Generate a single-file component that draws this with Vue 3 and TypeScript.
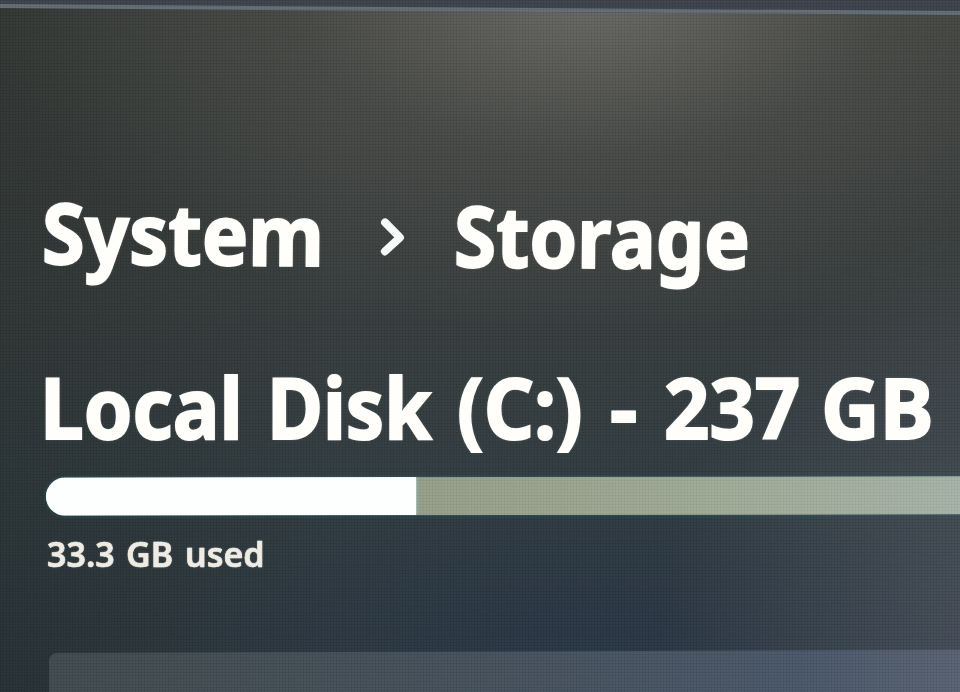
<template>
  <main class="settings">
    <div class="window-edge"></div>

    <nav class="breadcrumb">
      <span class="word">System</span>
      <svg class="chevron" viewBox="0 0 28 42" aria-hidden="true">
        <path d="M5 6 L20 21 L5 35" />
      </svg>
      <span class="word">Storage</span>
    </nav>

    <section class="disk">
      <h1 class="disk-title">
        <span v-for="part in titleParts" :key="part.text" class="word" :style="{ transform: `scaleX(${part.stretch})` }">{{ part.text }}</span>
      </h1>
      <div class="track">
        <div class="fill" :style="{ width: `${usedWidth}px` }"></div>
      </div>
      <p class="used">
        <span v-for="part in usedParts" :key="part">{{ part }}</span>
      </p>
    </section>

    <section class="card"></section>
    <div class="pixel-grid"></div>
  </main>
</template>

<script setup lang="ts">
interface TitlePart {
  text: string
  stretch: number
}

const titleParts: TitlePart[] = [
  { text: 'Local', stretch: 0.93 },
  { text: 'Disk', stretch: 0.91 },
  { text: '(C:)', stretch: 0.935 },
  { text: '-', stretch: 1.02 },
  { text: '237', stretch: 0.945 },
  { text: 'GB', stretch: 0.965 },
]

const usedParts = ['33.3', 'GB', 'used']
const usedWidth = 370
</script>

<style>
body {
  background: #30393c;
}
</style>

<style scoped>
.settings {
  position: relative;
  display: flex;
  flex-direction: column;
  width: 960px;
  height: 692px;
  overflow: hidden;
  color: #fffefa;
  font-family: "Noto Sans", "Open Sans", sans-serif;
  background:
    radial-gradient(ellipse 600px 340px at 590px -10px, rgba(126, 124, 120, 0.72), rgba(92, 92, 88, 0.4) 50%, transparent),
    radial-gradient(ellipse 360px 420px at 1020px 640px, rgba(94, 99, 112, 0.6), transparent),
    radial-gradient(ellipse 480px 190px at 590px 640px, rgba(42, 57, 77, 0.55), transparent),
    linear-gradient(90deg, rgba(30, 38, 36, 0.3), transparent 35%),
    linear-gradient(#40433f, #3c4141 42%, #354044 70%, #303b42);
}

.window-edge {
  height: 4px;
  margin: 0 -4px;
  flex: none;
  background: #42464f;
  border-bottom: 4px solid #667078;
  transform: rotate(0.42deg);
  transform-origin: 0 0;
  box-shadow: 0 -6px 0 2px #42464f;
}

.breadcrumb {
  display: flex;
  align-items: center;
  flex: none;
  height: 100px;
  margin: 174px 0 0 42px;
  transform: rotate(0.4deg);
  transform-origin: 0 50%;
}

.word {
  display: block;
  font-size: 84px;
  font-weight: 700;
  line-height: 100px;
  white-space: nowrap;
  transform: scaleX(0.925);
  transform-origin: 0 50%;
  -webkit-text-stroke: 2px #fffefa;
  text-shadow: 0 0 3px rgba(205, 230, 245, 0.5);
}

.breadcrumb .word {
  width: 338px;
}

.breadcrumb .word:last-child {
  transform: scaleX(0.912);
}

.chevron {
  width: 28px;
  height: 42px;
  margin: 6px 46px 0 0;
  flex: none;
  fill: none;
  stroke: #f7faf8;
  stroke-width: 8;
  stroke-linejoin: round;
  stroke-linecap: round;
}

.disk {
  flex: none;
  margin-top: 75px;
}

.disk-title {
  display: grid;
  grid-template-columns: 227px 190px 153px 54px 157px 130px;
  height: 100px;
  margin: 0 0 0 40px;
}

.track {
  height: 38px;
  margin: 20px 0 0 46px;
  overflow: hidden;
  border-radius: 19px 0 0 19px;
  background: linear-gradient(90deg, #959f8a 35%, #a0ab97 70%, #a8b3a9);
  box-shadow: 0 0 4px rgba(45, 105, 130, 0.7);
  transform: rotate(-0.08deg);
}

.fill {
  height: 100%;
  background: #fdffff;
  box-shadow: 0 0 3px #b9edfb;
}

.used {
  display: grid;
  grid-template-columns: 79px 59px 90px;
  margin: 14px 0 0 47px;
  font-size: 34px;
  font-weight: 600;
  line-height: 50px;
  color: #efede5;
  -webkit-text-stroke: 0.6px #efede5;
  text-shadow: 0 0 2px rgba(235, 225, 215, 0.6);
}

.card {
  flex: none;
  width: 940px;
  height: 80px;
  margin: 74px 0 0 49px;
  border-radius: 8px 0 0 0;
  background: linear-gradient(90deg, #454f52, #4a5662 55%, #4e5b6c 80%, #5f6776);
  transform: rotate(-0.2deg);
  transform-origin: 0 0;
}

/* fine mesh of the display panel */
.pixel-grid {
  position: absolute;
  inset: 0;
  pointer-events: none;
  background:
    repeating-linear-gradient(90deg, rgba(0, 0, 0, 0.1) 0 1px, transparent 1px 3px),
    repeating-linear-gradient(rgba(0, 0, 0, 0.1) 0 1px, transparent 1px 3px);
  mix-blend-mode: soft-light;
}
</style>
